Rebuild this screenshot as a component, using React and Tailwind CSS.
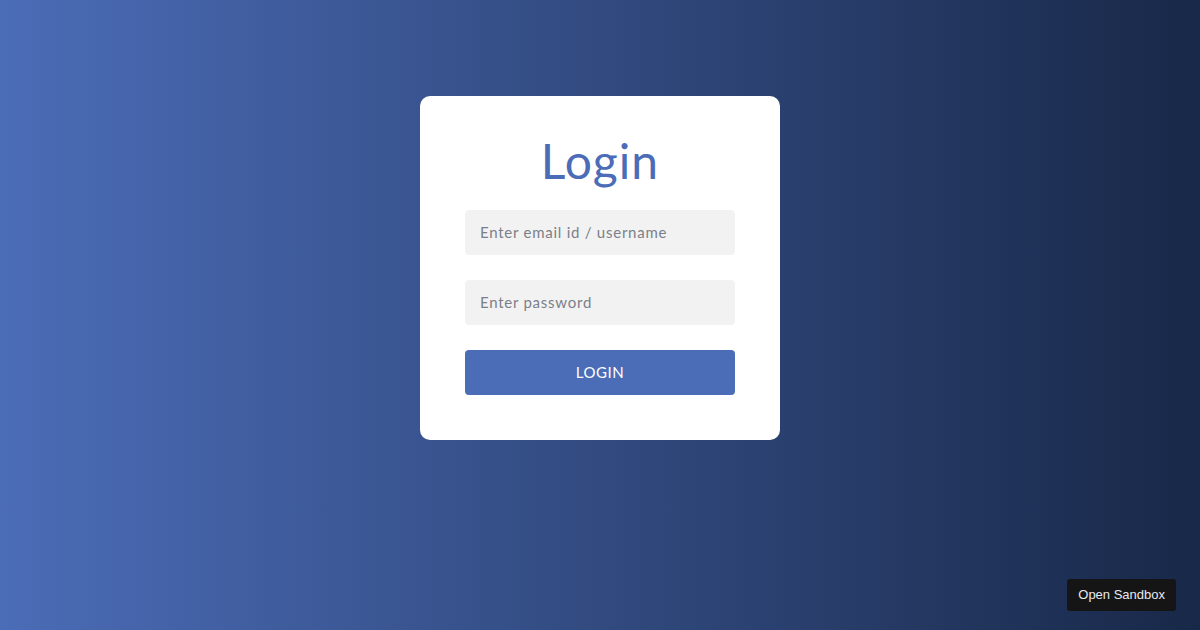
export default function App() {
  return (
    <div className="relative flex h-[630px] w-full justify-center bg-linear-to-r/srgb from-[#4b6cb7] to-[#182848] pt-[96px] font-['Lato','Noto_Sans',sans-serif]">
      <div className="flex h-[344px] w-[360px] flex-col items-center rounded-[10px] bg-white px-[45px]">
        <h1 className="mt-[36px] text-[48px] leading-[58px] font-normal tracking-[1px] text-[#4b6cb7]">Login</h1>
        <form className="mt-[20px] flex w-full flex-col gap-[25px]" onSubmit={(e) => e.preventDefault()}>
          <input
            type="text"
            placeholder="Enter email id / username"
            className="h-[45px] w-full rounded-[4px] bg-[#f2f2f2] px-[15px] pb-[2px] text-[15px] tracking-[0.75px] text-[#333] outline-none placeholder:text-[#7b7f89]"
          />
          <input
            type="password"
            placeholder="Enter password"
            className="h-[45px] w-full rounded-[4px] bg-[#f2f2f2] px-[15px] pb-[2px] text-[15px] tracking-[0.75px] text-[#333] outline-none placeholder:text-[#7b7f89]"
          />
          <button type="submit" className="h-[45px] w-full rounded-[4px] bg-[#4b6cb7] text-[15px] tracking-[0.5px] text-white">
            LOGIN
          </button>
        </form>
      </div>
      <div className="absolute right-[24px] bottom-[19px] flex h-[32px] items-center rounded-[3px] bg-[#151515] px-[11px] font-['Liberation_Sans',Arial,sans-serif] text-[13px] text-[#e8e8f0]">
        Open Sandbox
      </div>
    </div>
  );
}
